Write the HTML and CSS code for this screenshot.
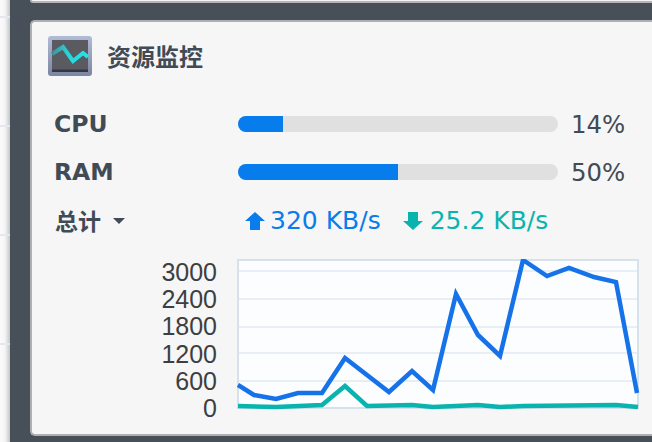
FILE: index.html
```html
<!DOCTYPE html>
<html lang="zh-CN">
<head>
<meta charset="utf-8">
<title>资源监控</title>
<link rel="stylesheet" href="styles.css">
</head>
<body>
<div class="strip">
  <div class="strip-line"></div>
  <div class="strip-line"></div>
  <div class="strip-line"></div>
  <div class="strip-line"></div>
</div>
<main class="desktop">
  <div class="top-stub"></div>
  <section class="card">
    <header class="card-head">
      <svg class="app-icon" viewBox="0 0 44 40" width="44" height="40" aria-hidden="true">
        <defs>
          <linearGradient id="frame" x1="0" y1="0" x2="0" y2="1">
            <stop offset="0" stop-color="#b3bcd6"/>
            <stop offset="1" stop-color="#7c859f"/>
          </linearGradient>
          <linearGradient id="wave" x1="0" y1="0" x2="1" y2="0">
            <stop offset="0" stop-color="#3f8f96"/>
            <stop offset="0.45" stop-color="#27d5dc"/>
            <stop offset="1" stop-color="#25e3e8"/>
          </linearGradient>
        </defs>
        <rect width="44" height="40" rx="3" fill="url(#frame)"/>
        <rect x="4" y="4" width="36" height="30" fill="#5a5a61"/>
        <rect x="4" y="33.5" width="36" height="2.5" fill="#343846"/>
        <path d="M4 18 L15 11 L25 25 L35 17 L40 21" fill="none" stroke="url(#wave)" stroke-width="4"/>
      </svg>
      <h1 class="card-title">资源监控</h1>
    </header>
    <div class="meters">
      <div class="meter-name">CPU</div>
      <div class="bar"><div class="bar-fill" style="width:14%"></div></div>
      <div class="meter-value">14%</div>
      <div class="meter-name">RAM</div>
      <div class="bar"><div class="bar-fill" style="width:50%"></div></div>
      <div class="meter-value">50%</div>
    </div>
    <div class="net-row">
      <div class="net-select">总计<span class="caret"></span></div>
      <div class="net-speed up">
        <svg class="arrow" viewBox="0 0 20 18" width="20" height="18" aria-hidden="true"><path d="M10 0 L20 9 L15 9 L15 18 L5 18 L5 9 L0 9 Z" fill="currentColor"/></svg>
        <span>320 KB/s</span>
      </div>
      <div class="net-speed down">
        <svg class="arrow" viewBox="0 0 20 18" width="20" height="18" aria-hidden="true"><path d="M5 0 L15 0 L15 9 L20 9 L10 18 L0 9 L5 9 Z" fill="currentColor"/></svg>
        <span>25.2 KB/s</span>
      </div>
    </div>
    <div class="chart">
      <div class="axis">
        <span>3000</span><span>2400</span><span>1800</span><span>1200</span><span>600</span><span>0</span>
      </div>
      <svg class="plot" viewBox="237 259 403 151" width="403" height="151" aria-hidden="true">
        <rect x="238" y="260" width="400" height="148" fill="#fcfdff" stroke="#d6e1ec" stroke-width="2"/>
        <g stroke="#e8eef5" stroke-width="2">
          <line x1="239" x2="637" y1="271" y2="271"/>
          <line x1="239" x2="637" y1="299" y2="299"/>
          <line x1="239" x2="637" y1="327" y2="327"/>
          <line x1="239" x2="637" y1="353" y2="353"/>
          <line x1="239" x2="637" y1="381" y2="381"/>
        </g>
        <polyline class="line-down" points="238,406 276,407 322,405 345,386 367,406 412,405 433,407 478,405 500,407 523,406 616,405 638,407"/>
        <polyline class="line-up" points="238,385 254,395 276,399 298,393 322,393 345,358 389,392 412,371 433,390 456,294 478,335 500,356 523,260 547,276 569,268 594,277 616,282 637,393"/>
      </svg>
    </div>
  </section>
</main>
</body>
</html>
```
FILE: styles.css
```css
* { box-sizing: border-box; }
html, body { margin: 0; height: 100%; }
body {
  display: flex;
  width: 652px;
  height: 442px;
  overflow: hidden;
  background: #474f58;
  font-family: "DejaVu Sans", "Noto Sans CJK SC", sans-serif;
  color: #414b55;
}
.strip {
  width: 10px;
  flex: none;
  padding-top: 16px;
  display: flex;
  flex-direction: column;
  gap: 107px;
  background: linear-gradient(90deg, #fbfbfb 0, #f4f4f4 50%, #c4c6c8 100%);
}
.strip-line { height: 2px; background: #e3e8ee; }
.desktop {
  flex: 1;
  min-width: 0;
  padding-left: 20px;
  display: flex;
  flex-direction: column;
}
.top-stub {
  height: 3px;
  background: #f6f6f6;
  border: 2px solid #b4b6b8;
  border-width: 0 0 2px 2px;
  border-bottom-left-radius: 4px;
}
.card {
  margin-top: 17px;
  height: 416px;
  background: #f6f6f6;
  border: 2px solid #aeb0b2;
  border-right: 0;
  border-radius: 5px 0 0 5px;
  padding: 14px 0 0 16px;
}
.card-head {
  display: flex;
  align-items: center;
  gap: 15px;
  height: 40px;
}
.app-icon { flex: none; }
.card-title {
  margin: 0;
  font: 700 24px/40px "Noto Sans CJK SC", sans-serif;
  color: #414b55;
}
.meters {
  display: grid;
  grid-template-columns: 184px 320px auto;
  grid-auto-rows: 48px;
  align-items: center;
  margin: 24px 0 0 6px;
}
.meter-name { font-weight: 700; font-size: 23.5px; line-height: 30px; }
.meter-value { font-size: 24.4px; line-height: 30px; padding: 1px 0 0 13px; }
.bar {
  height: 16px;
  border-radius: 8px;
  overflow: hidden;
  background: #e0e0e0;
}
.bar-fill { height: 100%; background: #077ded; }
.net-row {
  display: flex;
  align-items: center;
  height: 48px;
  margin: 1px 0 0 7px;
}
.net-select {
  width: 190px;
  flex: none;
  display: flex;
  align-items: center;
  margin-top: -3px;
  font: 700 23px/30px "Noto Sans CJK SC", sans-serif;
}
.caret {
  width: 0;
  height: 0;
  margin: 2px 0 0 12px;
  border: 6px solid transparent;
  border-top-color: #414b55;
  border-bottom: 0;
}
.net-speed {
  display: flex;
  align-items: center;
  font-size: 25px;
  line-height: 30px;
  margin-right: 22px;
}
.up { color: #0a7ceb; gap: 5px; }
.down { color: #0ab4ae; gap: 7px; }
.chart {
  display: flex;
  margin-top: 14px;
  align-items: flex-start;
}
.axis {
  width: 169px;
  height: 160px;
  margin-top: 1px;
  flex: none;
  display: flex;
  flex-direction: column;
  justify-content: space-between;
  align-items: flex-end;
  font: 25px/24px "Liberation Sans", sans-serif;
  color: #3c3f42;
}
.plot { margin: 0 0 0 20px; flex: none; }
.line-up, .line-down { fill: none; stroke-width: 4.5; stroke-linejoin: miter; }
.line-up { stroke: #1672e8; }
.line-down { stroke: #0ab4ae; }
```
